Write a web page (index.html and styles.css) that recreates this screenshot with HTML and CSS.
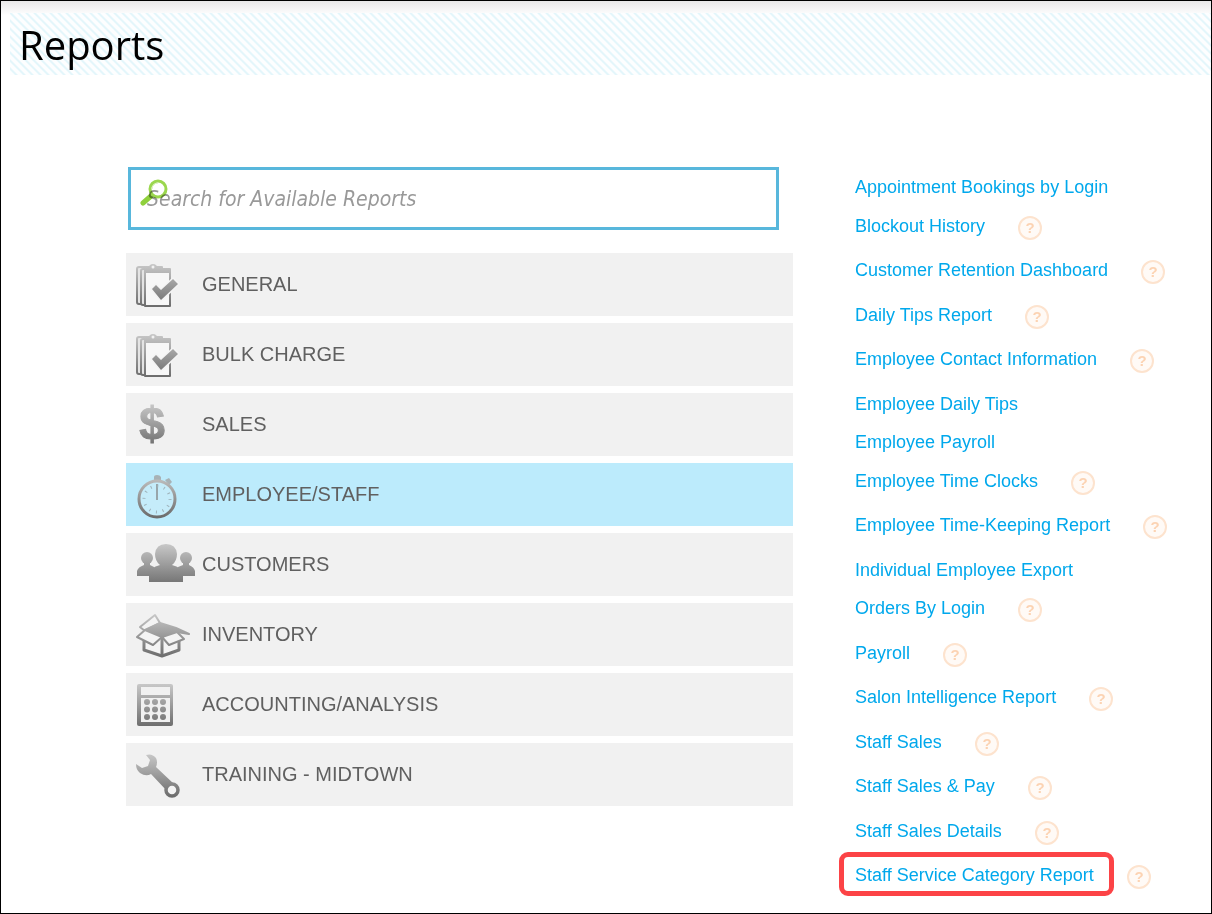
FILE: index.html
```html
<!DOCTYPE html>
<html lang="en">
<head>
  <meta charset="UTF-8">
  <meta name="viewport" content="width=device-width, initial-scale=1.0">
  <title>Reports</title>
  <link rel="stylesheet" href="styles.css">
</head>
<body>
  <!-- shared icon parts -->
  <svg class="defs" aria-hidden="true">
    <defs>
      <linearGradient id="steel" gradientUnits="userSpaceOnUse" x1="0" y1="2" x2="0" y2="46">
        <stop offset="0" stop-color="#cacaca"/>
        <stop offset="1" stop-color="#6c6c6c"/>
      </linearGradient>
      <symbol id="clipboard" viewBox="0 0 60 48">
        <g fill="#e4e4e4" stroke="url(#steel)" stroke-width="2" stroke-linejoin="round">
          <path d="M27 6H4Q2 6 2 8V41Q2 43 4 43H27Z"/>
          <path d="M30 8H8Q6 8 6 10V42Q6 44 8 44H30Z"/>
          <path d="M11 8H35V45H10V10Q10 8 11 8Z" fill="#f7f7f7"/>
        </g>
        <path d="M10 12V8H13Q14 3 18 3Q22 3 23 8H35V12Z" fill="url(#steel)"/>
        <circle cx="18" cy="6" r="1.5" fill="#f1f1f1"/>
        <path d="M17 28L21 24L26 29L38 18L43 23L26 39Z" fill="url(#steel)" stroke="#f4f4f4" stroke-width="3" paint-order="stroke"/>
      </symbol>
      <symbol id="help" viewBox="0 -1 24 28">
        <circle cx="12" cy="12" r="11" fill="#fffaf6" stroke="#fde3ce" stroke-width="2"/>
        <text x="12" y="17" text-anchor="middle" fill="#fcd3b3">?</text>
      </symbol>
    </defs>
  </svg>

  <header class="page-header">
    <h1>Reports</h1>
  </header>

  <main class="content">
    <section class="categories">
      <div class="search">
        <input type="text" aria-label="Search reports" placeholder="Search for Available Reports">
        <svg class="search-icon" viewBox="0 0 28 28" aria-hidden="true">
          <path d="M3 24L11 17" stroke="#8fd03c" stroke-width="5" stroke-linecap="round"/>
          <circle cx="18" cy="10" r="8" fill="none" stroke="#9bd74e" stroke-width="3"/>
          <path d="M12 10A6 6 0 0 1 18 4" fill="none" stroke="#d3edb5"/>
        </svg>
      </div>
      <ul class="category-list">
        <li><button type="button" class="category">
          <svg class="icon" aria-hidden="true"><use href="#clipboard"/></svg>GENERAL
        </button></li>
        <li><button type="button" class="category">
          <svg class="icon" aria-hidden="true"><use href="#clipboard"/></svg>BULK CHARGE
        </button></li>
        <li><button type="button" class="category">
          <svg class="icon dollar" viewBox="0 0 60 48" aria-hidden="true">
            <text x="17" y="39" text-anchor="middle" fill="url(#steel)" stroke="url(#steel)">$</text>
          </svg>SALES
        </button></li>
        <li><button type="button" class="category active">
          <svg class="icon" viewBox="0 0 60 48" aria-hidden="true">
            <path d="M19 9V6Q19 4 22 4Q25 4 26 6V9ZM30 9L34 7L37 11L34 14Z" fill="#a8b2b6"/>
            <circle cx="22" cy="28" r="18" fill="#c5ecfa" stroke="url(#steel)" stroke-width="3"/>
            <path d="M22 29V13" stroke="#98a5aa" stroke-width="2"/>
            <circle cx="22" cy="28" r="13" fill="none" stroke="#9fb3bb" stroke-width="3" stroke-dasharray="1 5.8"/>
          </svg>EMPLOYEE/STAFF
        </button></li>
        <li><button type="button" class="category">
          <svg class="icon" viewBox="0 0 60 48" aria-hidden="true">
            <g fill="url(#steel)">
              <circle cx="12" cy="17" r="6"/>
              <circle cx="51" cy="17" r="6"/>
              <path d="M2 35V30Q3 26 9 24V21H15V24L19 26V35ZM60 35V30Q59 26 54 24V21H48V24L43 26V35Z"/>
              <path d="M14 41V31Q15 27 25 24Q20 20 20 13Q21 3 31 3Q41 3 42 13Q42 20 37 24Q47 27 48 31V41Z"/>
            </g>
          </svg>CUSTOMERS
        </button></li>
        <li><button type="button" class="category">
          <svg class="icon" viewBox="0 0 60 48" aria-hidden="true">
            <g fill="#f4f4f4" stroke="url(#steel)" stroke-width="2" stroke-linejoin="round">
              <path d="M5 16L20 4L25 12L10 20Z"/>
              <path d="M9 30V39L27 45L44 39V29L27 25Z" stroke-width="3"/>
              <path d="M10 19L25 12L41 17L54 23L42 21L27 26Z" fill="url(#steel)"/>
              <path d="M10 19L2 26L18 34L27 26Z"/>
              <path d="M27 26L34 34L49 28L42 21Z"/>
              <path d="M27 27V45" stroke-width="3"/>
            </g>
          </svg>INVENTORY
        </button></li>
        <li><button type="button" class="category">
          <svg class="icon" viewBox="0 0 60 48" aria-hidden="true">
            <rect x="2" y="3" width="36" height="42" rx="2" fill="url(#steel)"/>
            <path d="M6 6H35V14H6ZM6 17H35V41H6Z" fill="#f1f1f1"/>
            <path d="M12 21H12.01M20 21H20.01M28 21H28.01M12 28.5H12.01M20 28.5H20.01M28 28.5H28.01M12 36H12.01M20 36H20.01M28 36H28.01" stroke="url(#steel)" stroke-width="6" stroke-linecap="round"/>
          </svg>ACCOUNTING/ANALYSIS
        </button></li>
        <li><button type="button" class="category">
          <svg class="icon" viewBox="0 0 60 48" aria-hidden="true">
            <path d="M11 4Q17 2 21 7Q23 11 21 16L39 33L32 40L16 23Q11 26 5 22Q1 19 1 13L7 17L13 15L15 9Z" fill="url(#steel)"/>
            <circle cx="37" cy="39" r="6" fill="#f4f4f4" stroke="url(#steel)" stroke-width="3.5"/>
          </svg>TRAINING - MIDTOWN
        </button></li>
      </ul>
    </section>

    <ul class="report-list">
      <li><a href="#">Appointment Bookings by Login</a></li>
      <li><a href="#">Blockout History</a><svg class="help" aria-hidden="true"><use href="#help"/></svg></li>
      <li><a href="#">Customer Retention Dashboard</a><svg class="help" aria-hidden="true"><use href="#help"/></svg></li>
      <li><a href="#">Daily Tips Report</a><svg class="help" aria-hidden="true"><use href="#help"/></svg></li>
      <li><a href="#">Employee Contact Information</a><svg class="help" aria-hidden="true"><use href="#help"/></svg></li>
      <li><a href="#">Employee Daily Tips</a></li>
      <li><a href="#">Employee Payroll</a></li>
      <li><a href="#">Employee Time Clocks</a><svg class="help" aria-hidden="true"><use href="#help"/></svg></li>
      <li><a href="#">Employee Time-Keeping Report</a><svg class="help" aria-hidden="true"><use href="#help"/></svg></li>
      <li><a href="#">Individual Employee Export</a></li>
      <li><a href="#">Orders By Login</a><svg class="help" aria-hidden="true"><use href="#help"/></svg></li>
      <li><a href="#">Payroll</a><svg class="help" aria-hidden="true"><use href="#help"/></svg></li>
      <li><a href="#">Salon Intelligence Report</a><svg class="help" aria-hidden="true"><use href="#help"/></svg></li>
      <li><a href="#">Staff Sales</a><svg class="help" aria-hidden="true"><use href="#help"/></svg></li>
      <li><a href="#">Staff Sales &amp; Pay</a><svg class="help" aria-hidden="true"><use href="#help"/></svg></li>
      <li><a href="#">Staff Sales Details</a><svg class="help" aria-hidden="true"><use href="#help"/></svg></li>
      <li><a href="#" class="highlight">Staff Service Category Report</a><svg class="help" aria-hidden="true"><use href="#help"/></svg></li>
    </ul>
  </main>
</body>
</html>
```

FILE: styles.css
```css
* {
  box-sizing: border-box;
}

body {
  display: flex;
  flex-direction: column;
  min-height: 100vh;
  margin: 0;
  border: 1px solid #000;
  background: #fff;
  font-family: "Liberation Sans", Arial, sans-serif;
}

ul {
  list-style: none;
  margin: 0;
  padding: 0;
}

.defs {
  position: absolute;
  width: 0;
  height: 0;
}

/* header */
.page-header {
  padding: 12px 0 0 9px;
  background: linear-gradient(#e9e8e9, #fbfbfb 12px, #fff 14px);
}

.page-header h1 {
  margin: 0;
  padding: 2px 9px 0;
  background: linear-gradient(45deg, #e3f6fb 6%, #fdfeff 18%, #fdfeff 38%, #e3f6fb 50%, #e3f6fb 56%, #fdfeff 68%, #fdfeff 88%, #e3f6fb) 0 0 / 8px 8px;
  color: #000;
  font-family: "Open Sans", sans-serif;
  font-size: 40px;
  font-weight: 400;
  line-height: 60px;
}

.content {
  display: flex;
  flex: 1;
  gap: 62px;
  padding: 92px 24px 21px 125px;
}

/* search and categories */
.categories {
  flex: 1;
}

.search {
  position: relative;
  margin: 0 14px 23px 2px;
}

.search input {
  display: block;
  width: 100%;
  height: 63px;
  padding: 0 14px 0 16px;
  border: 3px solid #58b7dc;
  background: #fff;
  color: #333;
  font-family: "DejaVu Sans Condensed", "DejaVu Sans", sans-serif;
  font-size: 21px;
  font-style: italic;
}

.search input::placeholder {
  color: #999;
  opacity: 1;
}

.search-icon {
  position: absolute;
  top: 12px;
  left: 12px;
  width: 28px;
  height: 28px;
  pointer-events: none;
  mix-blend-mode: multiply;
}

.category-list {
  display: flex;
  flex-direction: column;
  gap: 7px;
}

.category {
  display: flex;
  align-items: center;
  gap: 7px;
  width: 100%;
  height: 63px;
  padding: 0 9px;
  border: 0;
  background: #f1f1f1;
  color: #606060;
  font-family: inherit;
  font-size: 20px;
  text-align: left;
  cursor: pointer;
}

.category.active {
  background: #bcebfc;
}

.icon {
  flex: none;
  width: 60px;
  height: 48px;
}

.dollar {
  overflow: visible;
  font-size: 46px;
  font-weight: 700;
}

/* report links */
.report-list {
  display: flex;
  flex-direction: column;
  justify-content: space-between;
  width: 332px;
  padding-top: 9px;
}

.report-list li {
  display: flex;
  align-items: flex-start;
  gap: 33px;
}

.report-list a {
  position: relative;
  color: #00a8ec;
  font-size: 18px;
  line-height: 22px;
  text-decoration: none;
  white-space: nowrap;
}

.report-list .highlight::after {
  content: "";
  position: absolute;
  inset: -12px -20px -10px -16px;
  border: 5px solid #fc4346;
  border-radius: 9px;
}

.help {
  width: 24px;
  height: 28px;
  font-size: 15px;
  font-weight: 700;
}
```
